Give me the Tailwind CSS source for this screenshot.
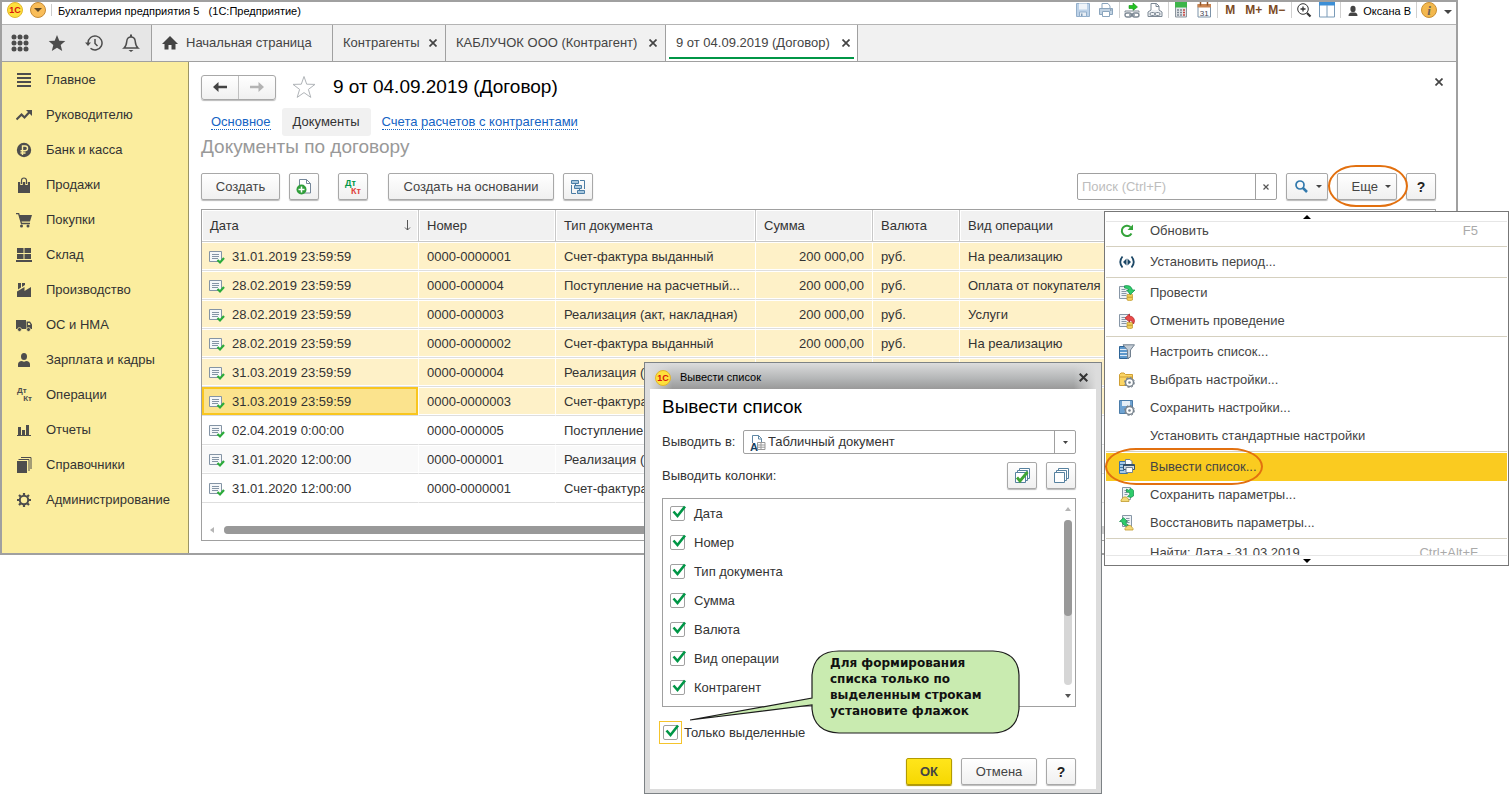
<!DOCTYPE html>
<html lang="ru">
<head>
  <meta charset="UTF-8">
  <meta name="viewport" content="width=device-width, initial-scale=1.0">
  <title>Бухгалтерия предприятия 5</title>
  <script src="https://cdn.jsdelivr.net/npm/@tailwindcss/browser@4"></script>
</head>
<body class="relative min-h-screen overflow-x-hidden bg-white font-['Liberation_Sans',Arial,sans-serif] text-[13px] leading-4 text-[#333]">

  <!-- Main window -->
  <div class="mr-[53px] border-2 border-[#a0a0a0] bg-white">

    <!-- Title bar -->
    <header class="flex h-[23px] items-center border-b border-[#b4b4b4] pr-1 pl-[5px] pb-[6px] text-xs text-black">
      <span class="flex size-4 items-center justify-center rounded-full border border-[#e3b52c] bg-[#fee13c] text-[9px] font-bold text-[#d8150c]">1С</span>
      <button class="ml-[7px] flex size-4 items-center justify-center rounded-full border border-[#c58a35] bg-[#f9bd59]" aria-label="Меню">
        <svg class="h-1 w-2" viewBox="0 0 8 4"><path d="M0 0h8L4 4z" fill="#5b4526"/></svg>
      </button>
      <span class="ml-[5px] h-3 w-px bg-[#ccc]"></span>
      <span class="ml-[6px] pt-[2px] text-[11px] whitespace-pre">Бухгалтерия предприятия 5   (1С:Предприятие)</span>

      <div class="ml-auto flex items-center gap-[7px]">
        <svg class="size-4" viewBox="0 0 16 16"><path d="M1.5 1.5h13v13h-13z" fill="#bdd2e8" stroke="#93afcb"/><path d="M4 1.5h8v6H4z" fill="#eff4f9"/><path d="M4.500 10h7v4.500h-7z" fill="#e8eef5" stroke="#93afcb"/><path d="M6 11.500h1.500V14H6z" fill="#7f9cb8"/></svg>
        <svg class="size-4" viewBox="0 0 16 16"><path d="M4 6V1.500h6L12 4v2" fill="#fff" stroke="#8ba5bd"/><path d="M1.500 6.500h13v6h-13z" fill="#c1d2e2" stroke="#8ba5bd"/><path d="M4.500 9.500h7v5h-7z" fill="#fff" stroke="#8ba5bd"/><path d="M12 8h1.500" stroke="#5d7890"/></svg>
        <span class="-mr-[3px] -ml-[2px] h-4 w-px bg-[#d0d0d0]"></span>
        <svg class="size-4" viewBox="0 0 16 16"><path d="M5 3.500h4V1l4.500 4L9 8.500V6.500H5z" fill="#22c322" stroke="#118d11" stroke-width=".6"/><path d="M1 10.500V9h14v1.500" fill="none" stroke="#7c8894"/><rect x="1" y="11" width="6.500" height="4" rx="2" fill="none" stroke="#7c8894" stroke-width="1.400"/><rect x="8.500" y="11" width="6.500" height="4" rx="2" fill="none" stroke="#7c8894" stroke-width="1.400"/><path d="M5 13h6" stroke="#7c8894" stroke-width="1.400"/></svg>
        <svg class="size-4" viewBox="0 0 16 16"><path d="M4 9V1.500h5.500L12 4v5" fill="#fff" stroke="#7c8894"/><path d="M9 1.500V4.500h3" fill="none" stroke="#7c8894"/><path d="M4 8l-3 2v4.500h14V10l-3-2" fill="#edf0f3" stroke="#7c8894"/><rect x="3" y="10.500" width="5" height="3" rx="1.500" fill="none" stroke="#7c8894"/><rect x="8" y="10.500" width="5" height="3" rx="1.500" fill="none" stroke="#7c8894"/></svg>
        <span class="-mr-[3px] -ml-[2px] h-4 w-px bg-[#d0d0d0]"></span>
        <svg class="size-4" viewBox="0 0 16 16"><path d="M2.500 1h11v14h-11z" fill="#e3e6e9" stroke="#8b959e"/><path d="M2 0h12v5.500H2z" fill="#3db54a"/><path d="M4 8h2M7 8h2M4 10.500h2M7 10.500h2M4 13h2M7 13h2" stroke="#7c8894" stroke-width="1.300"/><path d="M10 8h2M10 10.500h2M10 13h2" stroke="#c8453f" stroke-width="1.300"/></svg>
        <svg class="size-4" viewBox="0 0 16 16"><path d="M2 2.500h12.500v12.500H2z" fill="#fff" stroke="#7d93a8"/><path d="M1.500 2h13.500v3.500H1.500z" fill="#c98451"/><path d="M4.500 0v3.500M11.500 0v3.500" stroke="#8a532b" stroke-width="1.500"/><text x="8.200" y="13.500" font-size="8" text-anchor="middle" fill="#445">31</text></svg>
        <span class="-mr-[3px] -ml-[2px] h-4 w-px bg-[#d0d0d0]"></span>
        <button class="w-4 font-bold text-[#7c4a24]">M</button>
        <button class="w-4 font-bold whitespace-nowrap text-[#7c4a24]">M+</button>
        <button class="w-4 font-bold whitespace-nowrap text-[#7c4a24]">M−</button>
        <span class="-mr-[3px] ml-0 h-4 w-px bg-[#d0d0d0]"></span>
        <svg class="size-4" viewBox="0 0 16 16" fill="none" stroke="#333"><circle cx="7" cy="7" r="5.300"/><path d="M4.500 7h5M7 4.500v5" stroke-width="1.300"/><path d="M11 11l3.500 3.500" stroke-width="2.200"/></svg>
        <svg class="size-4" viewBox="0 0 16 16"><path d="M.5 1h15v14H.5z" fill="#fff" stroke="#7a9bb8"/><path d="M0 0h16v3.500H0z" fill="#3d8fd6"/><path d="M8 3v12" stroke="#7a9bb8"/></svg>
        <span class="-mr-[3px] -ml-[2px] h-4 w-px bg-[#d0d0d0]"></span>
        <span class="flex items-center gap-1 pt-[2px] pl-[2px] text-[11px]">
          <svg class="size-3" viewBox="0 0 12 12" fill="#444"><ellipse cx="6" cy="4" rx="2.600" ry="3.300"/><path d="M1.500 11q0-3.500 3-3.500h3q3 0 3 3.500z"/></svg>
          Оксана В
        </span>
        <span class="-mr-[3px] -ml-[2px] h-4 w-px bg-[#d0d0d0]"></span>
        <svg class="size-4" viewBox="0 0 16 16"><circle cx="8" cy="8" r="7.500" fill="#f3b84d" stroke="#c98f33"/><text x="8" y="13" font-size="13" font-weight="bold" font-style="italic" font-family="Liberation Serif" text-anchor="middle" fill="#6a6258">i</text></svg>
        <svg class="mt-1 h-1 w-2" viewBox="0 0 8 4"><path d="M0 0h8L4 4z" fill="#444"/></svg>
      </div>
    </header>

    <!-- Open tabs -->
    <nav class="flex h-[37px] border-b border-[#a0a0a0] bg-[#f1f1f1] text-[#444]">
      <div class="flex w-[150px] items-center gap-[19px] border-r border-[#a0a0a0] bg-[#e6e6e6] pl-[9px] text-[#4d4d4d]">
        <svg class="size-[18px]" viewBox="0 0 18 18" fill="currentColor"><circle cx="3" cy="3" r="2.500"/><circle cx="9" cy="3" r="2.500"/><circle cx="15" cy="3" r="2.500"/><circle cx="3" cy="9" r="2.500"/><circle cx="9" cy="9" r="2.500"/><circle cx="15" cy="9" r="2.500"/><circle cx="3" cy="15" r="2.500"/><circle cx="9" cy="15" r="2.500"/><circle cx="15" cy="15" r="2.500"/></svg>
        <svg class="size-[18px]" viewBox="0 0 18 18" fill="currentColor"><path d="M9 1l2.300 5.700 6 .4-4.600 3.900 1.500 6L9 13.700 3.800 17l1.500-6L.7 7.100l6-.4z"/></svg>
        <svg class="size-[18px]" viewBox="0 0 18 18" fill="none" stroke="currentColor" stroke-width="1.500"><path d="M3 9a7 7 0 1 1 2.500 5.300"/><path d="M10 5v4.500l2.500 2.500"/><path d="M0 8.500h6L3 12z" fill="currentColor" stroke="none"/></svg>
        <svg class="size-[18px]" viewBox="0 0 18 18" fill="none" stroke="currentColor" stroke-width="1.500"><path d="M2 14c2.500-2 2.500-4 2.800-7 .3-2.500 2-4 4.200-4s3.900 1.500 4.200 4c.3 3 .3 5 2.800 7z"/><path d="M9 3V.5" stroke-width="2"/><path d="M6.500 16h5l-2.500 2z" fill="currentColor" stroke="none"/></svg>
      </div>
      <a href="#" class="flex w-[181px] items-center gap-2 border-r border-[#a0a0a0] pl-[10px]">
        <svg class="size-4" viewBox="0 0 16 16" fill="#444"><path d="M8 1l8 8h-2.500v5.500h-4V10h-3v4.500h-4V9H0z"/></svg>
        Начальная страница
      </a>
      <a href="#" class="flex w-[113px] items-center justify-between border-r border-[#a0a0a0] px-2 pl-[10px]">Контрагенты
        <svg class="size-2" viewBox="0 0 8 8"><path d="M.5.5l7 7M7.500.5l-7 7" stroke="#444" stroke-width="1.700"/></svg></a>
      <a href="#" class="flex w-[220px] items-center justify-between border-r border-[#a0a0a0] px-2 pl-[10px]">КАБЛУЧОК ООО (Контрагент)
        <svg class="size-2" viewBox="0 0 8 8"><path d="M.5.5l7 7M7.500.5l-7 7" stroke="#444" stroke-width="1.700"/></svg></a>
      <div class="w-[192px] border-r border-[#a0a0a0] bg-white px-[3px]">
        <a href="#" class="flex h-[34px] items-center justify-between border-b-2 border-[#009646] pt-1 pr-1 pl-[7px]">9 от 04.09.2019 (Договор)
          <svg class="size-2" viewBox="0 0 8 8"><path d="M.5.5l7 7M7.500.5l-7 7" stroke="#444" stroke-width="1.700"/></svg></a>
      </div>
    </nav>

    <div class="flex">
      <!-- Sections -->
      <aside class="w-[187px] shrink-0 border-r border-[#9b9465] bg-[#fbed9e] pb-9">
        <a href="#" class="flex h-[35px] items-center gap-[14px] pl-[14px]">
          <svg class="size-4" viewBox="0 0 16 16"><path d="M1 2h14M1 6h14M1 10h14M1 14h14" stroke="#4d4d4d" stroke-width="2"/></svg>Главное</a>
        <a href="#" class="flex h-[35px] items-center gap-[14px] pl-[14px]">
          <svg class="size-4" viewBox="0 0 16 16"><path d="M.5 12.500l5-5 3 3 5-5.500" fill="none" stroke="#4d4d4d" stroke-width="2.200"/><path d="M10 3h6v6z" fill="#4d4d4d"/></svg>Руководителю</a>
        <a href="#" class="flex h-[35px] items-center gap-[14px] pl-[14px]">
          <svg class="size-4" viewBox="0 0 16 16"><circle cx="8" cy="8" r="7.200" fill="#4d4d4d"/><path d="M6.500 13V4h2.700a2.300 2.300 0 0 1 0 4.700H4.500M4.500 11h5" fill="none" stroke="#fbed9e" stroke-width="1.400"/></svg>Банк и касса</a>
        <a href="#" class="flex h-[35px] items-center gap-[14px] pl-[14px]">
          <svg class="size-4" viewBox="0 0 16 16"><path d="M2 5h12v11H2z" fill="#4d4d4d"/><path d="M5.500 8V3.500a2.500 2.500 0 0 1 5 0V8" fill="none" stroke="#fbed9e" stroke-width="2.600"/><path d="M5.500 7V3.500a2.500 2.500 0 0 1 5 0V7" fill="none" stroke="#4d4d4d" stroke-width="1.200"/></svg>Продажи</a>
        <a href="#" class="flex h-[35px] items-center gap-[14px] pl-[14px]">
          <svg class="size-4" viewBox="0 0 16 16" fill="#4d4d4d"><path d="M3 3h13l-2 6.500H5z"/><path d="M0 1.700h2.700L5.500 11.500H14" fill="none" stroke="#4d4d4d" stroke-width="1.300"/><circle cx="5.500" cy="14" r="1.500"/><circle cx="12" cy="14" r="1.500"/></svg>Покупки</a>
        <a href="#" class="flex h-[35px] items-center gap-[14px] pl-[14px]">
          <svg class="size-4" viewBox="0 0 16 16" fill="#4d4d4d"><path d="M1 1h6.500v5H1zM8.500 1H15v5H8.500zM1 7h6.500v5H1zM8.500 7H15v5H8.500zM0 13h16v2H0z"/></svg>Склад</a>
        <a href="#" class="flex h-[35px] items-center gap-[14px] pl-[14px]">
          <svg class="size-4" viewBox="0 0 16 16" fill="#4d4d4d"><path d="M1 15V9.500L8.500 5v4L15 5v10zM2 1h3v4.500L2 7.500zM6 1h3v2L6 5z"/></svg>Производство</a>
        <a href="#" class="flex h-[35px] items-center gap-[14px] pl-[14px]">
          <svg class="size-4" viewBox="0 0 16 16" fill="#4d4d4d"><path d="M0 3h10v9H0zM10.500 4.500H14l2 3V12h-5.500z"/><path d="M12 6h1.500l1 2H12z" fill="#fbed9e"/><circle cx="3.500" cy="12.500" r="2" stroke="#fbed9e" stroke-width=".7"/><circle cx="12.500" cy="12.500" r="2" stroke="#fbed9e" stroke-width=".7"/></svg>ОС и НМА</a>
        <a href="#" class="flex h-[35px] items-center gap-[14px] pl-[14px]">
          <svg class="size-4" viewBox="0 0 16 16" fill="#4d4d4d"><ellipse cx="8" cy="4.500" rx="3" ry="3.500"/><path d="M2 14.500v-2Q2 9 6 9q2 1.300 4 0 4 0 4 3.500v2q0 .5-.5.5h-11q-.5 0-.5-.5z"/></svg>Зарплата и кадры</a>
        <a href="#" class="flex h-[35px] items-center gap-[14px] pl-[14px]">
          <span class="flex w-4 flex-col pl-px text-[8px] leading-[8px] font-bold text-[#4d4d4d]"><span>Дт</span><span class="self-end">Кт</span></span>Операции</a>
        <a href="#" class="flex h-[35px] items-center gap-[14px] pl-[14px]">
          <svg class="size-4" viewBox="0 0 16 16" fill="#4d4d4d"><path d="M2 5h3v8H2zM6 8h3v5H6zM10 3h3v10h-3zM1 13h14v1H1z"/></svg>Отчеты</a>
        <a href="#" class="flex h-[35px] items-center gap-[14px] pl-[14px]">
          <svg class="size-4" viewBox="0 0 16 16" fill="#4d4d4d"><path d="M1 4h10v12H1z"/><path d="M2.500 2.500H13V14M5 .5h10V12" fill="none" stroke="#4d4d4d"/></svg>Справочники</a>
        <a href="#" class="flex h-[35px] items-center gap-[14px] pl-[14px]">
          <svg class="size-4" viewBox="0 0 16 16" fill="none" stroke="#4d4d4d"><circle cx="8" cy="8" r="4.200" stroke-width="2"/><path d="M8 1v2.500M8 12.500V15M1 8h2.500M12.500 8H15M3 3l1.800 1.800M11.200 11.200L13 13M13 3l-1.800 1.800M4.800 11.200L3 13" stroke-width="2.200"/></svg>Администрирование</a>
      </aside>

      <!-- Form -->
      <main class="min-w-0 flex-1 pt-3 pr-5 pl-3">
        <div class="flex h-[26px] items-center">
          <div class="flex h-[25px] w-[75px] rounded-[3px] border border-[#a8a8a8] bg-linear-to-b from-white to-[#f0f0f0] shadow-[0_1px_1px_#bbb]">
            <button class="flex flex-1 items-center justify-center border-r border-[#c0c0c0]" aria-label="Назад"><svg class="h-3 w-[14px]" viewBox="0 0 14 12"><path d="M0 6l5.500-5v3.800H14v2.400H5.500V11z" fill="#444"/></svg></button>
            <button class="flex flex-1 items-center justify-center" aria-label="Вперед"><svg class="h-3 w-[14px]" viewBox="0 0 14 12"><path d="M14 6L8.500 1v3.800H0v2.400h8.500V11z" fill="#b3b3b3"/></svg></button>
          </div>
          <svg class="ml-4 size-6" viewBox="0 0 24 24"><path d="M12 1.500l2.700 7.700 8.300.2-6.600 5 2.400 8L12 17.600l-6.800 4.800 2.400-8-6.600-5 8.300-.2z" fill="#fff" stroke="#b0b4b8"/></svg>
          <h1 class="ml-[17px] text-[19px] leading-6 text-black">9 от 04.09.2019 (Договор)</h1>
          <button class="-mr-[11px] ml-auto self-start p-1" aria-label="Закрыть"><svg class="size-2" viewBox="0 0 8 8"><path d="M.5.5l7 7M7.500.5l-7 7" stroke="#444" stroke-width="1.700"/></svg></button>
        </div>

        <div class="mt-2 flex h-7 items-center gap-[11px] pl-[10px]">
          <a href="#" class="border-b border-dotted border-[#1463c4] leading-[15px] text-[#1463c4]">Основное</a>
          <a href="#" class="flex h-7 w-[89px] items-center justify-center rounded-[3px] bg-[#f1f1f1]">Документы</a>
          <a href="#" class="border-b border-dotted border-[#1463c4] leading-[15px] text-[#1463c4]">Счета расчетов с контрагентами</a>
        </div>
        <h2 class="text-[19px] leading-[22px] text-[#999]">Документы по договору</h2>

        <!-- Command bar -->
        <div class="mt-[15px] flex h-[27px] items-stretch">
          <button class="w-[79px] rounded-[2px] border border-[#a8a8a8] bg-linear-to-b from-white to-[#f0f0f0] text-[#444] shadow-[0_1px_1px_#bbb]">Создать</button>
          <button class="ml-[9px] flex w-[30px] items-center justify-center rounded-[2px] border border-[#a8a8a8] bg-linear-to-b from-white to-[#f0f0f0] shadow-[0_1px_1px_#bbb]" aria-label="Скопировать">
            <svg class="size-4" viewBox="0 0 16 16"><path d="M3.500.5h7l4 4V14h-11z" fill="#fff" stroke="#75879a"/><path d="M10.500.5v4h4" fill="none" stroke="#75879a"/><circle cx="5.500" cy="10.500" r="5" fill="#2f9e3a"/><path d="M5.500 7.500v6M2.500 10.500h6" stroke="#fff" stroke-width="1.500"/></svg></button>
          <button class="ml-[19px] flex w-[30px] flex-col justify-center rounded-[2px] border border-[#a8a8a8] bg-linear-to-b from-white to-[#f0f0f0] px-[6px] text-[9px] leading-[8px] font-bold shadow-[0_1px_1px_#bbb]">
            <span class="self-start text-[#009646]">Дт</span><span class="self-end text-[#e0433d]">Кт</span></button>
          <button class="ml-5 w-[166px] rounded-[2px] border border-[#a8a8a8] bg-linear-to-b from-white to-[#f0f0f0] text-[#444] shadow-[0_1px_1px_#bbb]">Создать на основании</button>
          <button class="ml-[9px] flex w-[30px] items-center justify-center rounded-[2px] border border-[#a8a8a8] bg-linear-to-b from-white to-[#f0f0f0] shadow-[0_1px_1px_#bbb]" aria-label="Структура подчиненности">
            <svg class="size-4" viewBox="0 0 16 16" fill="#a9c8de" stroke="#4a7da5"><path d="M1.500 1.500h7v3h-7zM4.500 6.500h7v3h-7zM7.500 11.500h7v3h-7z"/><path d="M5.500 4.500v2M9.500 9.500v2M10 1.500h4.500V10M1.500 6v8.500H6" fill="none"/></svg></button>

          <div class="ml-auto flex w-[200px] rounded-[2px] border border-[#a0a0a0]">
            <input type="text" placeholder="Поиск (Ctrl+F)" aria-label="Поиск" class="min-w-0 flex-1 px-1 placeholder-[#bdbdbd] outline-none">
            <button class="flex w-[21px] items-center justify-center border-l border-[#a0a0a0]" aria-label="Очистить"><svg class="size-[6px]" viewBox="0 0 6 6"><path d="M.5.5l5 5M5.500.5l-5 5" stroke="#555" stroke-width="1.200"/></svg></button>
          </div>
          <button class="ml-[9px] flex w-[42px] items-center justify-between rounded-[2px] border border-[#a8a8a8] bg-linear-to-b from-white to-[#f0f0f0] pr-[5px] pl-2 shadow-[0_1px_1px_#bbb]" aria-label="Найти">
            <svg class="size-[13px]" viewBox="0 0 13 13" fill="none" stroke="#3179ad"><circle cx="5" cy="5" r="4" stroke-width="1.700"/><path d="M8 8l4 4" stroke-width="2.500"/></svg>
            <svg class="h-[3px] w-[6px]" viewBox="0 0 6 3"><path d="M0 0h6L3 3z" fill="#444"/></svg></button>
          <div class="relative ml-[9px] flex w-[60px]">
            <button class="flex flex-1 items-center justify-end gap-[7px] rounded-[2px] border border-[#a8a8a8] bg-linear-to-b from-white to-[#f0f0f0] pr-[5px] text-[#444] shadow-[0_1px_1px_#bbb]">Еще
              <svg class="h-[3px] w-[6px]" viewBox="0 0 6 3"><path d="M0 0h6L3 3z" fill="#444"/></svg></button>
            <!-- highlight ring -->
            <span class="pointer-events-none absolute -top-2 -left-[9px] z-10 h-[42px] w-[80px] rounded-[28px/21px] border-2 border-[#e2700f]"></span>
          </div>
          <button class="ml-[9px] w-[30px] rounded-[2px] border border-[#a8a8a8] bg-linear-to-b from-white to-[#f0f0f0] text-sm font-bold text-[#222] shadow-[0_1px_1px_#bbb]">?</button>
        </div>

        <!-- Documents list -->
        <div class="mt-[9px] mb-3 overflow-hidden border border-[#a0a0a0]">
          <table class="w-full table-fixed border-separate border-spacing-0 text-left">
            <colgroup>
              <col class="w-[217px]"><col class="w-[137px]"><col class="w-[200px]"><col class="w-[117px]"><col class="w-[87px]"><col>
            </colgroup>
            <thead>
              <tr class="h-8">
                <th class="border-r border-b border-[#c8c8c8] p-px font-normal"><div class="flex h-[29px] items-center justify-between bg-[#f1f1f1] pr-[6px] pl-[7px]">Дата <svg class="h-[11px] w-[7px]" viewBox="0 0 7 11"><path d="M3.500 0v10M1 7.500l2.500 2.500L6 7.500" fill="none" stroke="#555"/></svg></div></th>
                <th class="border-r border-b border-[#c8c8c8] p-px font-normal"><div class="flex h-[29px] items-center bg-[#f1f1f1] px-[7px]">Номер</div></th>
                <th class="border-r border-b border-[#c8c8c8] p-px font-normal"><div class="flex h-[29px] items-center bg-[#f1f1f1] px-[7px]">Тип документа</div></th>
                <th class="border-r border-b border-[#c8c8c8] p-px font-normal"><div class="flex h-[29px] items-center bg-[#f1f1f1] px-[7px]">Сумма</div></th>
                <th class="border-r border-b border-[#c8c8c8] p-px font-normal"><div class="flex h-[29px] items-center bg-[#f1f1f1] px-[7px]">Валюта</div></th>
                <th class="border-b border-[#c8c8c8] p-px font-normal"><div class="flex h-[29px] items-center bg-[#f1f1f1] px-[7px]">Вид операции</div></th>
              </tr>
            </thead>
            <tbody id="docs"></tbody>
          </table>
          <div class="mt-[23px] mb-[6px] flex h-2 items-center pl-2">
            <svg class="h-[6px] w-1" viewBox="0 0 4 6"><path d="M4 0v6L0 3z" fill="#b5b5b5"/></svg>
            <div class="ml-[10px] h-2 flex-1 rounded-full bg-[#d0d0d0]"><div class="h-2 w-[800px] rounded-full bg-[#999]"></div></div>
          </div>
        </div>
      </main>
    </div>
  </div>

  <!-- "Еще" menu -->
  <div class="absolute top-[211px] right-[2px] w-[405px] border border-[#777] bg-white px-px text-[#444]">
    <div class="flex h-[10px] items-center justify-center border-b border-[#e6e6e6]"><svg class="h-1 w-2" viewBox="0 0 8 4"><path d="M0 4h8L4 0z" fill="#000"/></svg></div>
    <div class="h-[333px] overflow-hidden">
      <button class="-mt-[5px] flex h-7 w-full items-center gap-[15px] pr-[29px] pl-[13px]">
        <svg class="size-4" viewBox="0 0 16 16"><path d="M12.500 10.500A5.200 5.200 0 1 1 11.500 4" fill="none" stroke="#33a33a" stroke-width="2"/><path d="M14 1.500v5.500H8.500z" fill="#33a33a"/></svg>
        Обновить<span class="ml-auto text-[#aaa]">F5</span></button>
      <hr class="my-px border-[#d5d0bf]">
      <button class="flex h-7 w-full items-center gap-[15px] pl-[13px]">
        <svg class="size-4" viewBox="0 0 16 16"><path d="M3.500 2.500Q-1 8 3.500 13.500M12.500 2.500Q17 8 12.500 13.500" fill="none" stroke="#1c4766" stroke-width="1.800"/><path d="M7.500 4.500v7L4 8zM8.500 4.500v7L12 8z" fill="#1c4766"/></svg>
        Установить период...</button>
      <hr class="my-px border-[#d5d0bf]">
      <button class="flex h-7 w-full items-center gap-[15px] pl-[13px]">
        <svg class="size-4" viewBox="0 0 16 16"><path d="M.5 1.500h10v12H.5z" fill="#eef2f6" stroke="#8796a6"/><path d="M2.500 4.500h4M2.500 6.500h5M2.500 8.500h5M2.500 10.500h5" stroke="#8796a6"/><path d="M8 9.500h5.500V15q-2.800 1.500-5.500 0z" fill="#f1cf5b" stroke="#c09a2c" stroke-width=".7"/><path d="M8 12.200h5.500" stroke="#c09a2c"/><path d="M5.500.8Q12-.5 13.500 5H16l-4.500 4.500L7.500 5H10Q9 3 5.500 3z" fill="#2ecc6b" stroke="#118b46" stroke-width=".7"/></svg>
        Провести</button>
      <button class="flex h-7 w-full items-center gap-[15px] pl-[13px]">
        <svg class="size-4" viewBox="0 0 16 16"><path d="M.5 1.500h10v12H.5z" fill="#eef2f6" stroke="#8796a6"/><path d="M2.500 4.500h4M2.500 6.500h5M2.500 8.500h5M2.500 10.500h5" stroke="#8796a6"/><path d="M8 9.500h5.500V15q-2.800 1.500-5.500 0z" fill="#f1cf5b" stroke="#c09a2c" stroke-width=".7"/><path d="M8 12.200h5.500" stroke="#c09a2c"/><path d="M6 5l4.500-4v2q5 .5 5 5.500l-1 2.500q-1-4-4-3.500V9z" fill="#e84a4a" stroke="#b01f1f" stroke-width=".7"/></svg>
        Отменить проведение</button>
      <hr class="my-px border-[#d5d0bf]">
      <button class="flex h-7 w-full items-center gap-[15px] pl-[13px]">
        <svg class="size-4" viewBox="0 0 16 16"><path d="M.5 2.500h9v12h-9z" fill="#5d98cc" stroke="#2d6496"/><path d="M1 5.500h8M1 8.500h8M1 11.500h8" stroke="#fff" stroke-width=".8"/><path d="M4 .8h11.500L11.500 6v7l-3 1.500V6z" fill="#c3ccd5" stroke="#71808f"/></svg>
        Настроить список...</button>
      <button class="flex h-7 w-full items-center gap-[15px] pl-[13px]">
        <svg class="size-4" viewBox="0 0 16 16"><path d="M.5 13.500v-11L2 1h3l1.500 1.500h7v11z" fill="#fbd565" stroke="#cf9f35"/><path d="M.5 5h13" stroke="#cf9f35"/><circle cx="10.500" cy="10.500" r="4" fill="#fff" stroke="#78838e" stroke-width="1.500"/><circle cx="10.500" cy="10.500" r="1.300" fill="#78838e"/><circle cx="10.500" cy="10.500" r="5" fill="none" stroke="#78838e" stroke-dasharray="2 1.900"/></svg>
        Выбрать настройки...</button>
      <button class="flex h-7 w-full items-center gap-[15px] pl-[13px]">
        <svg class="size-4" viewBox="0 0 16 16"><path d="M.5.5h13v13H.5z" fill="#6fa3d2" stroke="#4a7ca9"/><path d="M3 1h8v5H3z" fill="#e6eff7"/><circle cx="10.500" cy="10.500" r="4" fill="#fff" stroke="#78838e" stroke-width="1.500"/><circle cx="10.500" cy="10.500" r="1.300" fill="#78838e"/><circle cx="10.500" cy="10.500" r="5" fill="none" stroke="#78838e" stroke-dasharray="2 1.900"/></svg>
        Сохранить настройки...</button>
      <button class="flex h-7 w-full items-center pl-11">Установить стандартные настройки</button>
      <hr class="my-px border-[#d5d0bf]">
      <button class="relative flex h-7 w-full items-center gap-[15px] bg-[#facb20] pl-[13px]">
        <svg class="size-4" viewBox="0 0 16 16"><path d="M.5 2.500h8v12h-8z" fill="#a9cbe8" stroke="#3d76a8"/><path d="M1 5.500h4M1 8.500h4M1 11.500h4" stroke="#3d76a8"/><path d="M6.500 5V.5H11L13 2.500V5" fill="#fff" stroke="#75828f"/><path d="M4.500 5.500h11v5h-11z" fill="#d5dde5" stroke="#34506b"/><path d="M5 6.500h10" stroke="#34506b"/><path d="M7 8.500h6.500v5H7z" fill="#fff" stroke="#75828f"/></svg>
        Вывести список...
      </button>
      <button class="flex h-7 w-full items-center gap-[15px] pl-[13px]">
        <svg class="size-4" viewBox="0 0 16 16"><path d="M3.500.5h8v12h-8z" fill="#eef2f6" stroke="#8796a6"/><path d="M5.500 3.500h3M5.500 5.500h3M5.500 7.500h3" stroke="#8796a6"/><path d="M2 13l2.500-3h3L10 13v1.500H2z" fill="#f3d978" stroke="#c09a2c" stroke-width=".8"/><path d="M7.500 5V2l2 1.200Q12 0 14.500 3.500v5.500L12 10.500 8.500 9.500Q12 7.500 10.500 5.500z" fill="#2ecc6b" stroke="#118b46" stroke-width=".7"/></svg>
        Сохранить параметры...</button>
      <button class="flex h-7 w-full items-center gap-[15px] pl-[13px]">
        <svg class="size-4" viewBox="0 0 16 16"><path d="M3.500.5h9v11h-9z" fill="#eef2f6" stroke="#8796a6"/><path d="M7 3.500h3.500M7 5.500h3.500M7 7.500h3.500" stroke="#8796a6"/><path d="M6 13.500l2.500-3h3l2.500 3V15H6z" fill="#f3d978" stroke="#c09a2c" stroke-width=".8"/><path d="M.5 6.500l4-3.800 4 3.800H6.800q0 3 2.500 3.500-4.300 2.500-6.800-3.500z" fill="#2ecc6b" stroke="#118b46" stroke-width=".7"/></svg>
        Восстановить параметры...</button>
      <hr class="my-px border-[#d5d0bf]">
      <button class="flex h-[26px] w-full items-center justify-between pr-[29px] pl-11">Найти: Дата - 31.03.2019<span class="text-[#aaa]">Ctrl+Alt+F</span></button>
    </div>
    <div class="flex h-[10px] items-center justify-center border-t border-[#e6e6e6]"><svg class="h-1 w-2" viewBox="0 0 8 4"><path d="M0 0h8L4 4z" fill="#000"/></svg></div>
    <!-- highlight ring -->
    <span class="pointer-events-none absolute top-[236px] left-0 h-[37px] w-[158px] rounded-[32px/19px] border-2 border-[#e2700f]"></span>
  </div>

  <!-- "Вывести список" dialog -->
  <section class="absolute top-[362px] left-[644px] w-[458px] border border-[#7d8285] bg-[#dcdcdc] px-[5px] pb-1">
    <div class="flex h-[26px] items-center bg-[linear-gradient(to_right,#dcdcdc,transparent_5%,transparent_95%,#dcdcdc),linear-gradient(#dcdcdc,#b4b6b7_60%,#999)] pt-[3px] pr-2 pl-[5px] text-xs text-black">
      <span class="flex size-4 items-center justify-center rounded-full border border-[#e3b52c] bg-[#fee13c] text-[9px] font-bold text-[#d8150c]">1С</span>
      <span class="ml-[9px] text-[11px]">Вывести список</span>
      <button class="ml-auto" aria-label="Закрыть"><svg class="size-[9px]" viewBox="0 0 9 9"><path d="M.7.7l7.600 7.600M8.300.7L.7 8.300" stroke="#333" stroke-width="2"/></svg></button>
    </div>

    <form class="bg-white px-5 pt-[7px] pb-1 pl-3" onsubmit="event.preventDefault()">
      <h2 class="text-[19px] leading-[22px] text-black">Вывести список</h2>
      <div class="mt-3 flex items-center">
        <label for="target" class="w-[81px]">Выводить в:</label>
        <div class="relative h-6 flex-1 rounded-[2px] border border-[#a0a0a0]">
          <svg class="pointer-events-none absolute top-1 left-[6px] size-4" viewBox="0 0 16 16"><path d="M2.500 8V.5h6l3 3V7" fill="#fff" stroke="#5f87a5"/><path d="M8.500.5V4h3" fill="none" stroke="#5f87a5"/><path d="M7.500 7.500H15v7H7.500zM7.500 10H15M7.500 12.200H15M11 7.500v7" fill="#fff" stroke="#999"/><text x="0" y="15.500" font-size="11" font-weight="bold" fill="#173f5f">A</text></svg>
          <select id="target" class="h-[22px] w-full appearance-none bg-transparent pl-6 outline-none"><option>Табличный документ</option></select>
          <span class="pointer-events-none absolute top-0 right-0 flex h-full w-[21px] items-center justify-center border-l border-[#a0a0a0]"><svg class="h-[3px] w-[5px]" viewBox="0 0 5 3"><path d="M0 0h5L2.500 3z" fill="#444"/></svg></span>
        </div>
      </div>
      <div class="mt-2 flex h-[27px] items-center gap-[9px]">
        <span class="mr-auto">Выводить колонки:</span>
        <button type="button" class="flex h-[27px] w-[30px] items-center justify-center rounded-[2px] border border-[#a8a8a8] bg-linear-to-b from-white to-[#f0f0f0] shadow-[0_1px_1px_#bbb]" aria-label="Установить флажки">
          <svg class="size-4" viewBox="0 0 16 16" fill="#fff" stroke="#56819f"><path d="M5.500.5h10v10h-10z"/><path d="M3.500 2.500h10v10h-10z"/><path d="M1.500 4.500h10v10h-10z"/><path d="M3 9.500l3 3.500 7.500-9" fill="none" stroke="#3fa535" stroke-width="2.800"/></svg></button>
        <button type="button" class="flex h-[27px] w-[30px] items-center justify-center rounded-[2px] border border-[#a8a8a8] bg-linear-to-b from-white to-[#f0f0f0] shadow-[0_1px_1px_#bbb]" aria-label="Снять флажки">
          <svg class="size-4" viewBox="0 0 16 16" fill="#fff" stroke="#56819f"><path d="M5.500.5h10v10h-10z"/><path d="M3.500 2.500h10v10h-10z"/><path d="M1.500 4.500h10v10h-10z"/></svg></button>
      </div>

      <div class="mt-[9px] flex justify-between border border-[#a0a0a0] pr-[3px] pl-[7px]">
        <ul id="columns" class="pb-1"></ul>
        <div class="flex w-2 flex-col items-center pt-2 pb-2">
          <svg class="h-1 w-[6px]" viewBox="0 0 6 4"><path d="M0 4h6L3 0z" fill="#b5b5b5"/></svg>
          <div class="mt-[9px] mb-[9px] w-2 flex-1 rounded-full bg-[#d6d6d6]"><div class="h-24 rounded-full bg-[#999]"></div></div>
          <svg class="h-1 w-[6px]" viewBox="0 0 6 4"><path d="M0 0h6L3 4z" fill="#555"/></svg>
        </div>
      </div>

      <label class="-ml-[3px] mt-[14px] flex items-center gap-[2px]">
        <span class="relative flex border border-[#f5c42c] p-[3px]">
          <input type="checkbox" checked class="size-[15px] appearance-none rounded-[2px] border border-[#a0a0a0] bg-white">
          <svg class="pointer-events-none absolute top-[2px] left-[5px] h-[14px] w-[15px]" viewBox="0 0 15 14"><path d="M1.500 6.500L5.500 11 13 1.500" fill="none" stroke="#009646" stroke-width="2.600"/></svg>
        </span>
        Только выделенные</label>

      <div class="mt-[14px] flex h-[27px] justify-end gap-[9px]">
        <button class="w-[46px] rounded-[2px] border border-[#b39b00] bg-linear-to-b from-[#ffe51a] to-[#f6d800] font-bold text-[#444] shadow-[0_1px_1px_#a79000]">ОК</button>
        <button type="button" class="w-[76px] rounded-[2px] border border-[#a8a8a8] bg-linear-to-b from-white to-[#f0f0f0] text-[#444] shadow-[0_1px_1px_#bbb]">Отмена</button>
        <button type="button" class="w-[30px] rounded-[2px] border border-[#a8a8a8] bg-linear-to-b from-white to-[#f0f0f0] text-sm font-bold text-[#222] shadow-[0_1px_1px_#bbb]">?</button>
      </div>
    </form>

    <!-- Callout -->
    <div class="absolute top-[286px] left-[44px] h-[86px] w-[332px]">
      <svg class="absolute inset-0 size-full" viewBox="0 0 332 86"><path d="M123 49V26Q125 2 150 2H304Q329 3 330 26V60Q328 83 304 84H150Q125 83 123 60V56L1 71z" fill="#c9ebb0" stroke="#1c1c1c" stroke-width="1.200"/></svg>
      <p class="relative pt-[6px] pl-[141px] font-['DejaVu_Sans',Verdana,sans-serif] text-xs leading-4 font-bold text-[#111]">Для формирования<br>списка только по<br>выделенным строкам<br>установите флажок</p>
    </div>
  </section>

<script>
  const docs = [
    ["31.01.2019 23:59:59", "0000-0000001", "Счет-фактура выданный", "На реализацию"],
    ["28.02.2019 23:59:59", "0000-000004", "Поступление на расчетный...", "Оплата от покупателя"],
    ["28.02.2019 23:59:59", "0000-000003", "Реализация (акт, накладная)", "Услуги"],
    ["28.02.2019 23:59:59", "0000-0000002", "Счет-фактура выданный", "На реализацию"],
    ["31.03.2019 23:59:59", "0000-000004", "Реализация (акт, накладная)", "Услуги"],
    ["31.03.2019 23:59:59", "0000-0000003", "Счет-фактура выданный", "На реализацию"],
    ["02.04.2019 0:00:00", "0000-000005", "Поступление на расчетный...", "Оплата от покупателя"],
    ["31.01.2020 12:00:00", "0000-000001", "Реализация (акт, накладная)", "Услуги"],
    ["31.01.2020 12:00:00", "0000-0000001", "Счет-фактура выданный", "На реализацию"],
  ];
  const selected = 6; // first six rows are selected
  const current = 5;

  const docIcon = `<svg class="size-4 shrink-0" viewBox="0 0 16 16"><path d="M.5 2.500h12v10H.5z" fill="#f5f7f9" stroke="#8494a5"/><path d="M3 5.500h7M3 7.500h7M3 9.500h6" stroke="#8494a5"/><path d="M8.500 11l2.500 2.500L15 9" fill="none" stroke="#2bab3a" stroke-width="2.200"/></svg>`;

  document.getElementById("docs").innerHTML = docs.map(([date, num, type, op], i) => {
    const td = "border-r border-b border-r-transparent border-b-[#dedede] p-0";
    const fill = i < selected ? "bg-[#fef1c8]" : i === 7 ? "bg-[#f9f9f9]" : "bg-white";
    const cell = "my-px h-[26px] truncate px-[8px] leading-7";
    const first = i === current
      ? "flex h-7 items-center gap-[7px] border-2 border-[#f9c61f] bg-[#fbe38d] px-[5px] pt-[2px]"
      : `my-px flex h-[26px] items-center gap-[7px] px-[7px] pt-[2px] ${fill}`;
    return `<tr>
      <td class="${td}"><div class="${first}">${docIcon}${date}</div></td>
      <td class="${td}"><div class="${cell} ${fill}">${num}</div></td>
      <td class="${td}"><div class="${cell} ${fill}">${type}</div></td>
      <td class="${td}"><div class="${cell} text-right ${fill}">200 000,00</div></td>
      <td class="${td}"><div class="${cell} ${fill}">руб.</div></td>
      <td class="border-b border-b-[#dedede] p-0"><div class="${cell} ${fill}">${op}</div></td>
    </tr>`;
  }).join("");

  const columns = ["Дата", "Номер", "Тип документа", "Сумма", "Валюта", "Вид операции", "Контрагент"];
  document.getElementById("columns").innerHTML = columns.map(name => `
    <li><label class="relative flex h-[29px] items-center gap-[9px]">
      <input type="checkbox" checked class="size-[15px] appearance-none rounded-[2px] border border-[#a0a0a0] bg-white">
      <svg class="pointer-events-none absolute top-[6px] left-[2px] h-[14px] w-[15px]" viewBox="0 0 15 14"><path d="M1.500 6.500L5.500 11 13 1.500" fill="none" stroke="#009646" stroke-width="2.600"/></svg>
      ${name}</label></li>`).join("");
</script>
</body>
</html>
